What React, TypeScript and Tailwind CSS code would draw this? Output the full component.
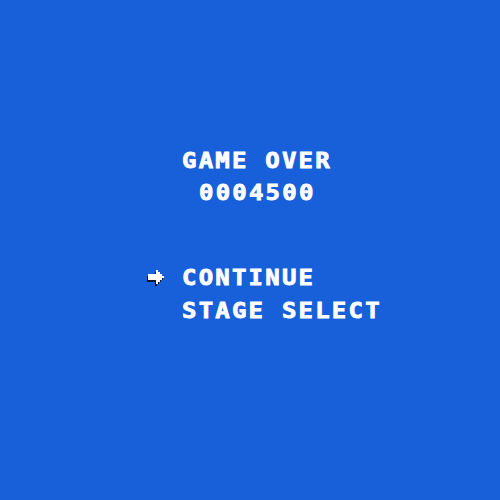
import React from "react";

const pixel =
  "font-['DejaVu_Sans_Mono',monospace] font-bold text-[24px] leading-none tracking-[2.2px] text-white uppercase scale-y-[0.86] origin-top-left [-webkit-text-stroke:0.9px_white] whitespace-nowrap";

function Arrow() {
  // Stepped pixel cursor pointing right, with a dark drop shadow
  const shape = "M0 4h8V0h2v2h2v2h2v2h2v2h-2v2h-2v2h-2v2H8v-4H0z";
  return (
    <svg width="18" height="16" viewBox="0 0 18 16" className="block" shapeRendering="crispEdges">
      <path d={shape} fill="#0c1430" transform="translate(0 2)" />
      <path d={shape} fill="#ffffff" transform="translate(1 0)" />
    </svg>
  );
}

export default function App() {
  return (
    <div className="w-[500px] h-[500px] bg-[#1760da] flex flex-col items-start pt-[151px] pl-[182px]">
      <div className={pixel}>GAME OVER</div>
      <div className={`${pixel} mt-[8px] ml-[17px]`}>0004500</div>
      <div className="relative mt-[61px]">
        <div className="absolute left-[-35px] top-[2px]">
          <Arrow />
        </div>
        <div className={pixel}>CONTINUE</div>
      </div>
      <div className={`${pixel} mt-[9px]`}>STAGE SELECT</div>
    </div>
  );
}
